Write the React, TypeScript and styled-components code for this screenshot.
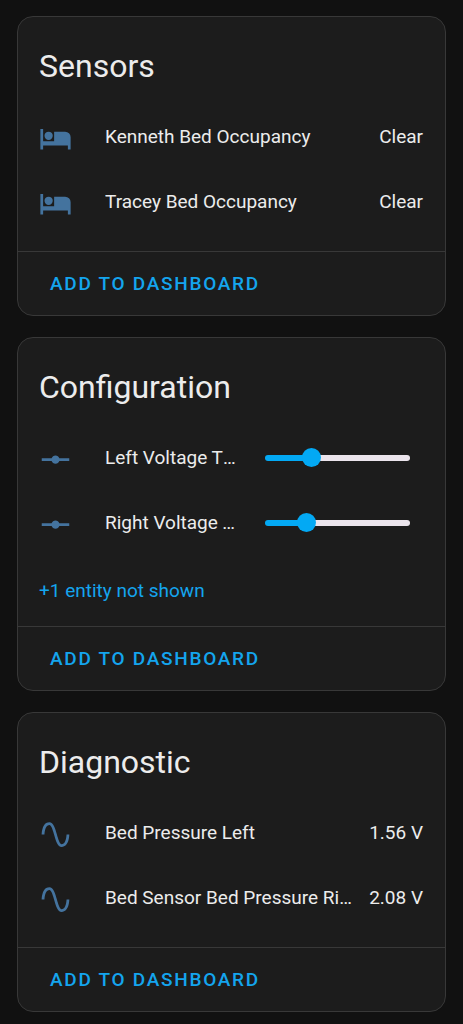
import React, { useId, useState } from "react";
import styled, { createGlobalStyle } from "styled-components";

const GlobalStyle = createGlobalStyle`
  *, *::before, *::after { box-sizing: border-box; }
  body {
    margin: 0;
    background: #111111;
    color: #ececec;
    font-family: Roboto, "Noto Sans", sans-serif;
    font-size: 19px;
    line-height: 26px;
  }
`;

const Page = styled.main`
  display: flex;
  flex-direction: column;
  gap: 21px;
  padding: 16px 17px 12px;
`;

const Card = styled.section`
  display: flex;
  flex-direction: column;
  background: #1c1c1c;
  border: 1px solid #383838;
  border-radius: 16px;
`;

const CardTitle = styled.h2`
  margin: 0;
  padding: 25px 22px 20px 21px;
  font-size: 32px;
  line-height: 48px;
  font-weight: 400;
`;

const CardContent = styled.div`
  padding: 0 22px 22px 21px;
`;

const Rows = styled.ul`
  display: flex;
  flex-direction: column;
  gap: 11px;
  margin: 0;
  padding: 0;
  list-style: none;
`;

const Row = styled.li`
  display: flex;
  align-items: center;
  height: 54px;
`;

const Icon = styled.svg`
  flex: none;
  width: 33px;
  height: 33px;
  margin: 2px 33px 0 0;
  fill: #44739e;
`;

const nameStyle = `
  flex: 1;
  min-width: 0;
  overflow: hidden;
  white-space: nowrap;
  text-overflow: ellipsis;
`;

const Name = styled.span`
  ${nameStyle}
`;

const NameLabel = styled.label`
  ${nameStyle}
`;

const Value = styled.span`
  flex: none;
  margin-left: 11px;
`;

const Slider = styled.input<{ $percent: number }>`
  appearance: none;
  flex: none;
  width: 145px;
  height: 19px;
  margin: 0 13px 0 25px;
  background: transparent;
  cursor: pointer;

  &::-webkit-slider-runnable-track {
    height: 6px;
    border-radius: 3px;
    background: linear-gradient(
      to right,
      #03a9f4 ${(p) => p.$percent}%,
      #ebe4ec ${(p) => p.$percent}%
    );
  }

  &::-webkit-slider-thumb {
    appearance: none;
    width: 19px;
    height: 19px;
    margin-top: -7px;
    border: 0;
    border-radius: 50%;
    background: #03a9f4;
  }
`;

const MoreLink = styled.a`
  display: block;
  padding: 28px 0 0;
  color: #14a5ee;
  text-decoration: none;
`;

const CardActions = styled.footer`
  display: flex;
  align-items: center;
  height: 64px;
  padding: 0 21px;
  border-top: 1px solid #383838;
`;

const ActionButton = styled.button`
  padding: 11px;
  border: 0;
  background: none;
  color: #14a5ee;
  font: inherit;
  font-weight: 500;
  letter-spacing: 0.09em;
  text-transform: uppercase;
  cursor: pointer;
`;

const icons = {
  bed: "M19,7H11V14H3V5H1V20H3V17H21V20H23V11A4,4 0 0,0 19,7M7,13A3,3 0 0,0 10,10A3,3 0 0,0 7,7A3,3 0 0,0 4,10A3,3 0 0,0 7,13Z",
  slider: "M2,11H9.17C9.58,9.83 10.69,9 12,9C13.31,9 14.42,9.83 14.83,11H22V13H14.83C14.42,14.17 13.31,15 12,15C10.69,15 9.58,14.17 9.17,13H2V11Z",
  wave: "M16.5,21C13.5,21 12.31,16.76 11.05,12.28C10.14,9.04 9,5 7.5,5C4.11,5 4,11.93 4,12H2C2,11.63 2.06,3 7.5,3C10.5,3 11.71,7.25 12.97,11.74C13.83,14.8 15,19 16.5,19C19.94,19 20.03,12.07 20.03,12H22.03C22.03,12.37 21.97,21 16.5,21Z",
};

function EntityIcon({ name }: { name: keyof typeof icons }) {
  return (
    <Icon viewBox="0 0 24 24" aria-hidden="true">
      <path d={icons[name]} />
    </Icon>
  );
}

interface StateRowProps {
  icon: keyof typeof icons;
  name: string;
  value: string;
}

function StateRow({ icon, name, value }: StateRowProps) {
  return (
    <Row>
      <EntityIcon name={icon} />
      <Name>{name}</Name>
      <Value>{value}</Value>
    </Row>
  );
}

function SliderRow({ name, initial }: { name: string; initial: number }) {
  const id = useId();
  const [value, setValue] = useState(initial);
  return (
    <Row>
      <EntityIcon name="slider" />
      <NameLabel htmlFor={id}>{name}</NameLabel>
      <Slider
        id={id}
        type="range"
        min={0}
        max={100}
        value={value}
        $percent={value}
        onChange={(e) => setValue(Number(e.target.value))}
      />
    </Row>
  );
}

interface EntityCardProps {
  title: string;
  more?: string;
  children: React.ReactNode;
}

function EntityCard({ title, more, children }: EntityCardProps) {
  return (
    <Card>
      <CardTitle>{title}</CardTitle>
      <CardContent>
        <Rows>{children}</Rows>
        {more && <MoreLink href="#entities">{more}</MoreLink>}
      </CardContent>
      <CardActions>
        <ActionButton type="button">Add to dashboard</ActionButton>
      </CardActions>
    </Card>
  );
}

export default function App() {
  return (
    <>
      <GlobalStyle />
      <Page>
        <EntityCard title="Sensors">
          <StateRow icon="bed" name="Kenneth Bed Occupancy" value="Clear" />
          <StateRow icon="bed" name="Tracey Bed Occupancy" value="Clear" />
        </EntityCard>
        <EntityCard title="Configuration" more="+1 entity not shown">
          <SliderRow name="Left Voltage Threshold" initial={29} />
          <SliderRow name="Right Voltage Threshold" initial={25} />
        </EntityCard>
        <EntityCard title="Diagnostic">
          <StateRow icon="wave" name="Bed Pressure Left" value="1.56 V" />
          <StateRow icon="wave" name="Bed Sensor Bed Pressure Right" value="2.08 V" />
        </EntityCard>
      </Page>
    </>
  );
}
